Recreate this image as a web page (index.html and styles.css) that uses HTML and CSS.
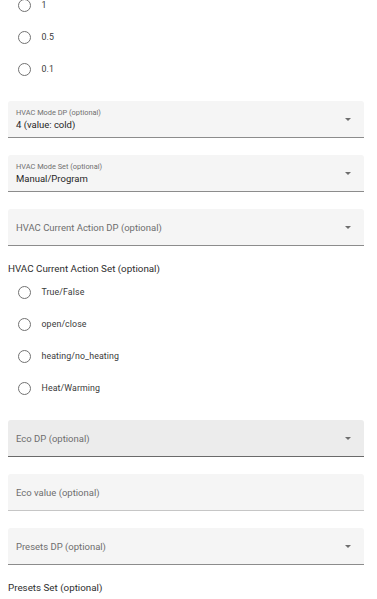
FILE: index.html
```html
<!DOCTYPE html>
<html>
<head>
<meta charset="utf-8">
<link rel="stylesheet" href="styles.css">
</head>
<body>
<div class="form">
  <div class="radios top">
    <label class="radio"><span class="circle"></span><span class="rtext">1</span></label>
    <label class="radio"><span class="circle"></span><span class="rtext">0.5</span></label>
    <label class="radio"><span class="circle"></span><span class="rtext">0.1</span></label>
  </div>

  <div class="field select">
    <div class="inner">
      <span class="float">HVAC Mode DP (optional)</span>
      <span class="value">4 (value: cold)</span>
    </div>
    <svg class="arrow" width="6" height="3" viewBox="0 0 6 3"><path d="M0 0h6L3 3z" fill="#6e6e6e"/></svg>
  </div>

  <div class="field select">
    <div class="inner">
      <span class="float">HVAC Mode Set (optional)</span>
      <span class="value">Manual/Program</span>
    </div>
    <svg class="arrow" width="6" height="3" viewBox="0 0 6 3"><path d="M0 0h6L3 3z" fill="#6e6e6e"/></svg>
  </div>

  <div class="field select">
    <div class="inner">
      <span class="placeholder">HVAC Current Action DP (optional)</span>
    </div>
    <svg class="arrow" width="6" height="3" viewBox="0 0 6 3"><path d="M0 0h6L3 3z" fill="#6e6e6e"/></svg>
  </div>

  <div class="section-label">HVAC Current Action Set (optional)</div>
  <div class="radios">
    <label class="radio"><span class="circle"></span><span class="rtext">True/False</span></label>
    <label class="radio"><span class="circle"></span><span class="rtext">open/close</span></label>
    <label class="radio"><span class="circle"></span><span class="rtext">heating/no_heating</span></label>
    <label class="radio"><span class="circle"></span><span class="rtext">Heat/Warming</span></label>
  </div>

  <div class="field select hover">
    <div class="inner">
      <span class="placeholder">Eco DP (optional)</span>
    </div>
    <svg class="arrow" width="6" height="3" viewBox="0 0 6 3"><path d="M0 0h6L3 3z" fill="#6e6e6e"/></svg>
  </div>

  <div class="field text">
    <div class="inner">
      <span class="placeholder">Eco value (optional)</span>
    </div>
  </div>

  <div class="field select">
    <div class="inner">
      <span class="placeholder">Presets DP (optional)</span>
    </div>
    <svg class="arrow" width="6" height="3" viewBox="0 0 6 3"><path d="M0 0h6L3 3z" fill="#6e6e6e"/></svg>
  </div>

  <div class="section-label">Presets Set (optional)</div>
</div>
</body>
</html>
```

FILE: styles.css
```css
html, body {
  margin: 0;
  padding: 0;
  background: #ffffff;
  overflow: hidden;
}
body {
  font-family: Roboto, "Liberation Sans", sans-serif;
  color: rgba(0, 0, 0, 0.87);
}
.form {
  display: flex;
  flex-direction: column;
  padding: 0 13px 0 8px;
  margin-top: -11px;
}
.radios {
  display: flex;
  flex-direction: column;
}
.radio {
  display: flex;
  align-items: center;
  height: 32px;
}
.circle {
  box-sizing: border-box;
  width: 13px;
  height: 13px;
  margin-left: 9.5px;
  border: 1.4px solid #727272;
  border-radius: 50%;
  flex: none;
}
.rtext {
  margin-left: 11px;
  font-size: 8.8px;
  letter-spacing: 0.1px;
  color: #3a3a3a;
}
.field {
  box-sizing: border-box;
  height: 37px;
  background: #f5f5f5;
  border-radius: 3px 3px 0 0;
  border-bottom: 1px solid #8c8c8c;
  display: flex;
  align-items: center;
  padding: 0 13px 0 8px;
  margin-bottom: 17px;
}
.field.hover {
  background: #ececec;
  border-bottom: 1.5px solid #6a6a6a;
}
.field.text {
  border-bottom-color: #c6c6c6;
}
.inner {
  flex: 1;
  display: flex;
  flex-direction: column;
  justify-content: center;
}
.float {
  font-size: 7.4px;
  color: #707070;
  line-height: 10px;
  margin-top: 1px;
}
.value {
  font-size: 9.5px;
  line-height: 13px;
  color: #262626;
}
.placeholder {
  font-size: 9.5px;
  color: #6e6e6e;
  line-height: 13px;
  margin-top: 1px;
}
.arrow {
  flex: none;
  margin-top: 1px;
}
.section-label {
  font-size: 9.8px;
  line-height: 14px;
  margin-top: -1px;
  color: #2e2e2e;
}
.radios + .field {
  margin-top: 16px;
}
```
